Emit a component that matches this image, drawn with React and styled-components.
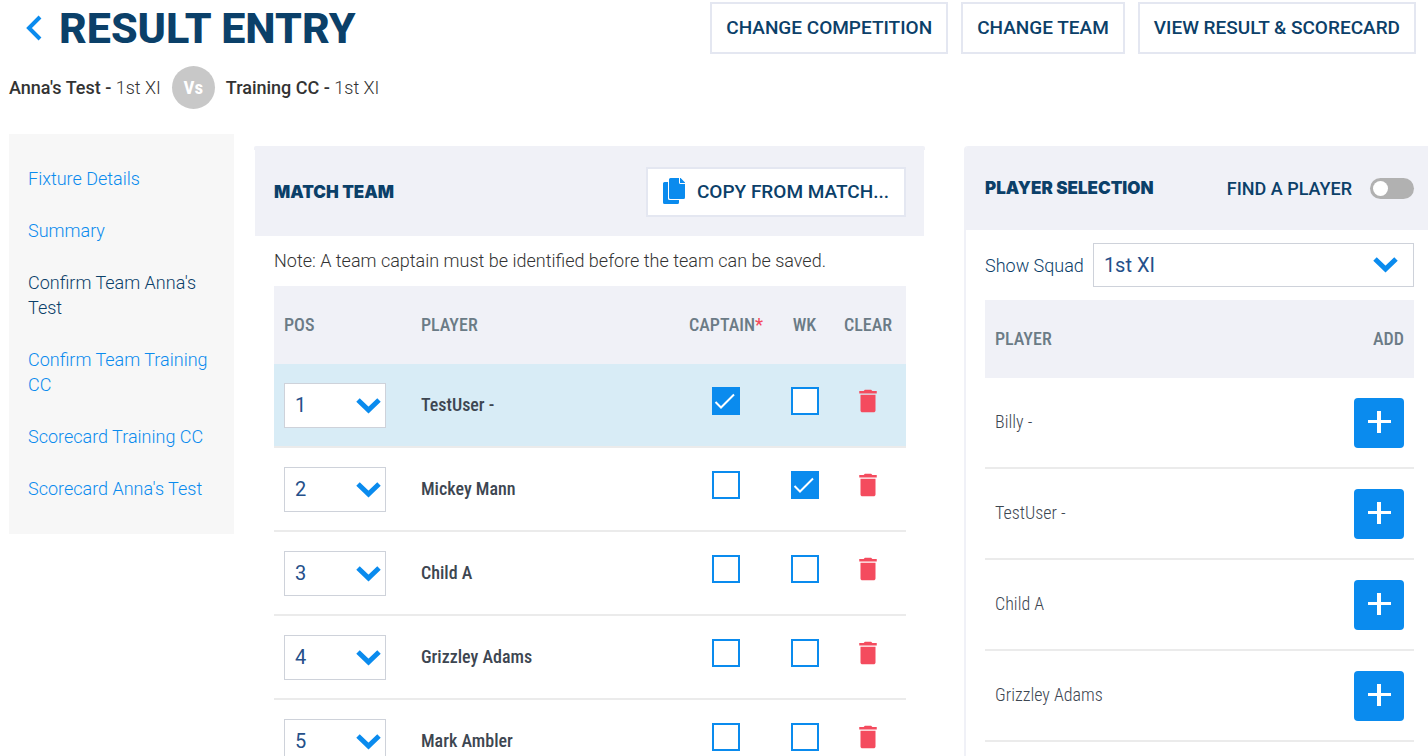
import React, { useState } from 'react'
import styled, { createGlobalStyle, ThemeProvider } from 'styled-components'

const theme = {
  navy: '#0b4069',
  blue: '#0a8bee',
  red: '#f44b5e',
  text: '#333333',
  panel: '#f0f1f7',
  outline: '#e4e7f1',
  line: '#ebebeb',
  condensed: "'Roboto Condensed', 'Open Sans Condensed', Roboto, sans-serif",
}

const GlobalStyle = createGlobalStyle`
  *, *::before, *::after {
    box-sizing: border-box;
  }
  body {
    margin: 0;
    background: #fff;
    color: ${theme.text};
    font-family: Roboto, sans-serif;
    font-size: 18px;
    font-weight: 350;
    line-height: 25px;
  }
  button, select, input {
    font-family: inherit;
    margin: 0;
  }
`

// Header

const Header = styled.header`
  display: flex;
  align-items: center;
  gap: 13px;
  padding: 2px 12px 0 24px;
`

const BackLink = styled.a`
  display: flex;
  width: 22px;
  color: ${p => p.theme.blue};
`

const PageTitle = styled.h1`
  margin: 0 auto 0 0;
  color: ${p => p.theme.navy};
  font-size: 43px;
  font-weight: 800;
  line-height: 50px;
`

const OutlineButton = styled.button`
  display: flex;
  align-items: center;
  gap: 12px;
  height: ${p => (p.$compact ? 50 : 52)}px;
  padding: 0 ${p => (p.$compact ? 15 : 14)}px 2px;
  border: 2px solid ${p => p.theme.outline};
  background: #fff;
  color: ${p => p.theme.navy};
  font-size: 19px;
  font-weight: 500;
  text-transform: uppercase;
  white-space: nowrap;

  svg {
    color: ${p => p.theme.blue};
  }
`

const Teams = styled.div`
  display: flex;
  align-items: center;
  gap: 11px;
  padding: 12px 9px 25px;

  strong {
    font-weight: 500;
  }
`

const Versus = styled.span`
  display: flex;
  align-items: center;
  justify-content: center;
  width: 43px;
  height: 43px;
  border-radius: 50%;
  background: #c8c8c8;
  color: #fff;
  font-family: ${p => p.theme.condensed};
  font-size: 19px;
  font-weight: 700;
`

// Layout

const Columns = styled.div`
  display: grid;
  grid-template-columns: 225px minmax(0, 711fr) minmax(0, 483fr);
  padding-left: 9px;
`

const SideNav = styled.nav`
  align-self: start;
  padding: 18px 19px 20px;
  background: #f7f7f7;
`

const NavLink = styled.a`
  display: block;
  padding: 14px 0 13px;
  color: ${p => (p.$current ? p.theme.navy : p.theme.blue)};
  text-decoration: none;
`

const TeamPanel = styled.section`
  margin: 12px 20px 0;
  border-top: 4px solid ${p => p.theme.panel};
  border-radius: 2px;
`

const SquadPanel = styled.section`
  margin: 12px 0 0 19px;
  border-left: 2px solid ${p => p.theme.panel};
  border-radius: 4px 0 0 0;
  overflow: hidden;
`

const PanelHead = styled.div`
  display: flex;
  align-items: center;
  justify-content: space-between;
  height: ${p => (p.$tall ? 86 : 84)}px;
  margin: 0 ${p => (p.$tall ? 1 : 0)}px;
  padding: ${p => (p.$tall ? '0 18px 2px 19px' : '0 14px 0 19px')};
  background: ${p => p.theme.panel};
`

const PanelTitle = styled.h2`
  margin: 0;
  color: ${p => p.theme.navy};
  font-family: Inter, Roboto, sans-serif;
  font-size: 17px;
  font-weight: 900;
  text-transform: uppercase;
`

const PanelBody = styled.div`
  padding: ${p => (p.$squad ? '13px 14px 0 19px' : '12px 19px 0 20px')};
`

const Note = styled.p`
  margin: 0 0 13px;
`

// Table

const Table = styled.table`
  width: 100%;
  border-spacing: 0;
  table-layout: fixed;
`

const Th = styled.th`
  width: ${p => (p.$width ? `${p.$width}px` : 'auto')};
  height: 78px;
  padding: 0 ${p => (p.$snug ? 0 : 10)}px 2px;
  background: ${p => p.theme.panel};
  color: #6b7b86;
  font-family: ${p => p.theme.condensed};
  font-size: 18px;
  font-weight: 500;
  text-align: ${p => p.$align || 'left'};
  text-transform: uppercase;

  em {
    color: ${p => p.theme.red};
    font-style: normal;
  }
`

const Row = styled.tr`
  background: ${p => (p.$captain ? '#d8ecf6' : '#fff')};
`

const Td = styled.td`
  height: ${p => (p.$squad ? 91 : 84)}px;
  padding: 0 ${p => (p.$snug ? 0 : 10)}px ${p => (p.$control ? 8 : 0)}px;
  border-bottom: 2px solid ${p => p.theme.line};
  text-align: ${p => p.$align || 'left'};
  vertical-align: middle;
`

const NameCell = styled(Td)`
  padding-bottom: 2px;
  color: #3d4651;
  font-family: ${p => p.theme.condensed};
  font-size: 18px;
  font-weight: ${p => (p.$squad ? 300 : 500)};
`

// Controls

const SelectBox = styled.span`
  position: relative;
  display: flex;
  flex: 1;
  max-width: ${p => (p.$wide ? 'none' : '102px')};

  svg {
    position: absolute;
    top: ${p => (p.$wide ? 14 : 15)}px;
    right: ${p => (p.$wide ? 16 : 5)}px;
    pointer-events: none;
    color: ${p => p.theme.blue};
  }
`

const Select = styled.select`
  appearance: none;
  width: 100%;
  height: ${p => (p.$wide ? 44 : 45)}px;
  padding: 0 10px;
  border: 1px solid #ced2da;
  border-radius: 0;
  background: #fff;
  color: #25508a;
  font-size: 20px;
  font-weight: 400;
`

const SquadField = styled.div`
  display: flex;
  align-items: center;
  gap: 9px;
  margin-bottom: 13px;
  color: ${p => p.theme.navy};
`

const CheckWrap = styled.span`
  position: relative;
  display: inline-flex;
  vertical-align: middle;

  svg {
    position: absolute;
    inset: 0;
    pointer-events: none;
  }
`

const CheckInput = styled.input`
  appearance: none;
  width: 28px;
  height: 28px;
  border: 2px solid ${p => p.theme.blue};
  background: #fff;

  &:checked {
    background: ${p => p.theme.blue};
  }
`

const ClearButton = styled.button`
  display: inline-flex;
  padding: 0;
  border: 0;
  background: none;
  color: ${p => p.theme.red};
  vertical-align: middle;
`

const AddButton = styled.button`
  display: inline-flex;
  align-items: center;
  justify-content: center;
  width: 50px;
  height: 50px;
  padding: 0;
  border: 0;
  border-radius: 4px;
  background: ${p => p.theme.blue};
  color: #fff;
  vertical-align: middle;
`

const ToggleLabel = styled.label`
  display: flex;
  align-items: center;
  gap: 18px;
  color: ${p => p.theme.navy};
  font-weight: 500;
  text-transform: uppercase;
`

const Toggle = styled.input`
  appearance: none;
  display: flex;
  align-items: center;
  width: 44px;
  height: 21px;
  padding: 0 3px;
  border-radius: 11px;
  background: #b1b1b1;

  &::before {
    content: '';
    width: 15px;
    height: 15px;
    border-radius: 50%;
    background: #fff;
  }
  &:checked {
    justify-content: flex-end;
    background: ${p => p.theme.blue};
  }
`

// Icons

const BackIcon = () => (
  <svg width="20" height="26" viewBox="0 0 20 26" fill="none" stroke="currentColor" strokeWidth="4" aria-hidden="true">
    <path d="M16 2 5 13l11 11" />
  </svg>
)

const ChevronIcon = () => (
  <svg width="25" height="16" viewBox="0 0 25 16" fill="none" stroke="currentColor" strokeWidth="5" aria-hidden="true">
    <path d="M2 2l10.500 10L23 2" />
  </svg>
)

const CopyIcon = () => (
  <svg width="22" height="26" viewBox="0 0 22 26" fill="currentColor" aria-hidden="true">
    <path d="M1.500 4H5v16.500Q5 22 6.500 22H16v2.500q0 1.500-1.500 1.500h-13Q0 26 0 24.500v-19Q0 4 1.500 4z" />
    <path d="M7.500 0H16v4.500Q16 6 17.500 6H22v13.500q0 1.500-1.500 1.500h-13Q6 21 6 19.500v-18Q6 0 7.500 0z" />
    <path d="M17 0h.6L22 4.400V5h-5z" />
  </svg>
)

const CheckIcon = () => (
  <svg width="28" height="28" viewBox="0 0 28 28" fill="none" stroke="#fff" strokeWidth="2" aria-hidden="true">
    <path d="M3.500 15l5.500 5.500L22 7.500" />
  </svg>
)

const TrashIcon = () => (
  <svg width="30" height="30" viewBox="0 0 24 24" fill="currentColor" aria-hidden="true">
    <path d="M6 19.500c0 .8.700 1.500 1.500 1.500h9c.8 0 1.500-.7 1.500-1.500V7H6v12.500zM19 4h-3.500l-1-1h-5l-1 1H5v2h14V4z" />
  </svg>
)

const PlusIcon = () => (
  <svg width="24" height="24" viewBox="0 0 24 24" fill="none" stroke="currentColor" aria-hidden="true">
    <path strokeWidth="4" d="M12 0v22" />
    <path strokeWidth="3" d="M1 10.500h23" />
  </svg>
)

const Checkbox = ({ label, checked, onChange }) => (
  <CheckWrap>
    <CheckInput type="checkbox" aria-label={label} checked={checked} onChange={onChange} />
    {checked && <CheckIcon />}
  </CheckWrap>
)

const links = [
  'Fixture Details',
  'Summary',
  "Confirm Team Anna's Test",
  'Confirm Team Training CC',
  'Scorecard Training CC',
  "Scorecard Anna's Test",
]

const team = ['TestUser -', 'Mickey Mann', 'Child A', 'Grizzley Adams', 'Mark Ambler']

const squad = ['Billy -', 'TestUser -', 'Child A', 'Grizzley Adams']

const App = () => {
  const [captain, setCaptain] = useState(0)
  const [keeper, setKeeper] = useState(1)

  return (
    <ThemeProvider theme={theme}>
      <GlobalStyle />
      <Header>
        <BackLink href="#back" aria-label="Back">
          <BackIcon />
        </BackLink>
        <PageTitle>RESULT ENTRY</PageTitle>
        <OutlineButton>Change competition</OutlineButton>
        <OutlineButton>Change team</OutlineButton>
        <OutlineButton>View result &amp; scorecard</OutlineButton>
      </Header>
      <Teams>
        <span>
          <strong>Anna's Test -</strong> 1st XI
        </span>
        <Versus>Vs</Versus>
        <span>
          <strong>Training CC -</strong> 1st XI
        </span>
      </Teams>
      <Columns>
        <SideNav>
          {links.map((link, i) => (
            <NavLink key={link} href={`#step-${i + 1}`} $current={i === 2}>
              {link}
            </NavLink>
          ))}
        </SideNav>

        <TeamPanel>
          <PanelHead $tall>
            <PanelTitle>Match team</PanelTitle>
            <OutlineButton $compact>
              <CopyIcon />
              Copy from match...
            </OutlineButton>
          </PanelHead>
          <PanelBody>
            <Note>Note: A team captain must be identified before the team can be saved.</Note>
            <Table>
              <thead>
                <tr>
                  <Th $width={137}>Pos</Th>
                  <Th>Player</Th>
                  <Th $width={94} $align="center" $snug>
                    Captain<em>*</em>
                  </Th>
                  <Th $width={63} $align="center" $snug>WK</Th>
                  <Th $width={64} $align="center" $snug>Clear</Th>
                  <Th $width={6} $snug aria-hidden="true" />
                </tr>
              </thead>
              <tbody>
                {team.map((name, i) => (
                  <Row key={name} $captain={captain === i}>
                    <Td>
                      <SelectBox>
                        <Select aria-label={`Position of ${name}`} defaultValue={i + 1}>
                          {team.map((_, n) => (
                            <option key={n} value={n + 1}>{n + 1}</option>
                          ))}
                        </Select>
                        <ChevronIcon />
                      </SelectBox>
                    </Td>
                    <NameCell>{name}</NameCell>
                    <Td $align="center" $control $snug>
                      <Checkbox label={`${name} captain`} checked={captain === i} onChange={() => setCaptain(i)} />
                    </Td>
                    <Td $align="center" $control $snug>
                      <Checkbox label={`${name} wicket keeper`} checked={keeper === i} onChange={() => setKeeper(i)} />
                    </Td>
                    <Td $align="center" $control $snug>
                      <ClearButton aria-label={`Clear ${name}`}>
                        <TrashIcon />
                      </ClearButton>
                    </Td>
                    <Td $snug />
                  </Row>
                ))}
              </tbody>
            </Table>
          </PanelBody>
        </TeamPanel>

        <SquadPanel>
          <PanelHead>
            <PanelTitle>Player selection</PanelTitle>
            <ToggleLabel>
              Find a player
              <Toggle type="checkbox" role="switch" />
            </ToggleLabel>
          </PanelHead>
          <PanelBody $squad>
            <SquadField>
              <label htmlFor="squad">Show Squad</label>
              <SelectBox $wide>
                <Select id="squad" $wide>
                  <option>1st XI</option>
                </Select>
                <ChevronIcon />
              </SelectBox>
            </SquadField>
            <Table>
              <thead>
                <tr>
                  <Th>Player</Th>
                  <Th $width={90} $align="right">Add</Th>
                </tr>
              </thead>
              <tbody>
                {squad.map(name => (
                  <Row key={name}>
                    <NameCell $squad>{name}</NameCell>
                    <Td $squad $align="right">
                      <AddButton aria-label={`Add ${name}`}>
                        <PlusIcon />
                      </AddButton>
                    </Td>
                  </Row>
                ))}
              </tbody>
            </Table>
          </PanelBody>
        </SquadPanel>
      </Columns>
    </ThemeProvider>
  )
}

export default App
